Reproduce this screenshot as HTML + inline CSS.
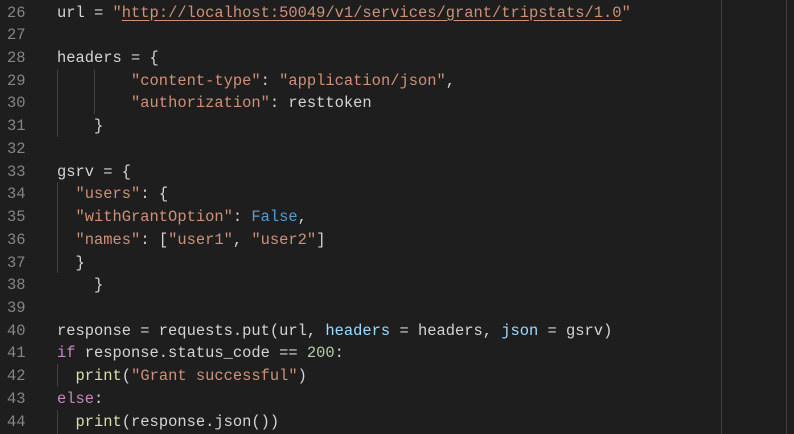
<!DOCTYPE html>
<html><head><meta charset="utf-8">
<style>
html,body{margin:0;padding:0;background:#1e1e1e;width:794px;height:434px;overflow:hidden;}
.ed{position:absolute;left:0;top:1.6px;font-family:"Liberation Mono",monospace;font-size:15.43px;line-height:22.72px;color:#d4d4d4;}
.l{height:22.72px;white-space:pre;position:relative;}
.n{position:absolute;left:7px;color:#858585;}
.c{position:absolute;left:57px;}
.s{color:#ce9178}
.k{color:#c586c0}
.b{color:#569cd6}
.p{color:#9cdcfe}
.f{color:#dcdcaa}
.num{color:#b5cea8}
.u{text-decoration:underline;text-underline-offset:3px}
.g{position:absolute;width:1px;background:#404040;}
.r{position:absolute;top:0;width:1px;height:434px;background:#3e3e3e;}
</style></head><body>
<div class="r" style="left:721px"></div>
<div class="r" style="left:786px"></div>
<!-- indent guides -->
<div class="g" style="left:57px;top:69px;height:68px"></div>
<div class="g" style="left:94px;top:69px;height:45px"></div>
<div class="g" style="left:57px;top:182px;height:91px"></div>
<div class="g" style="left:57px;top:364px;height:23px"></div>
<div class="g" style="left:57px;top:410px;height:24px"></div>
<div class="ed">
<div class="l"><span class="n">26</span><span class="c">url = <span class="s">"<span class="u">http://localhost:50049/v1/services/grant/tripstats/1.0</span>"</span></span></div>
<div class="l"><span class="n">27</span></div>
<div class="l"><span class="n">28</span><span class="c">headers = {</span></div>
<div class="l"><span class="n">29</span><span class="c">        <span class="s">"content-type"</span>: <span class="s">"application/json"</span>,</span></div>
<div class="l"><span class="n">30</span><span class="c">        <span class="s">"authorization"</span>: resttoken</span></div>
<div class="l"><span class="n">31</span><span class="c">    }</span></div>
<div class="l"><span class="n">32</span></div>
<div class="l"><span class="n">33</span><span class="c">gsrv = {</span></div>
<div class="l"><span class="n">34</span><span class="c">  <span class="s">"users"</span>: {</span></div>
<div class="l"><span class="n">35</span><span class="c">  <span class="s">"withGrantOption"</span>: <span class="b">False</span>,</span></div>
<div class="l"><span class="n">36</span><span class="c">  <span class="s">"names"</span>: [<span class="s">"user1"</span>, <span class="s">"user2"</span>]</span></div>
<div class="l"><span class="n">37</span><span class="c">  }</span></div>
<div class="l"><span class="n">38</span><span class="c">    }</span></div>
<div class="l"><span class="n">39</span></div>
<div class="l"><span class="n">40</span><span class="c">response = requests.put(url, <span class="p">headers</span> = headers, <span class="p">json</span> = gsrv)</span></div>
<div class="l"><span class="n">41</span><span class="c"><span class="k">if</span> response.status_code == <span class="num">200</span>:</span></div>
<div class="l"><span class="n">42</span><span class="c">  <span class="f">print</span>(<span class="s">"Grant successful"</span>)</span></div>
<div class="l"><span class="n">43</span><span class="c"><span class="k">else</span>:</span></div>
<div class="l"><span class="n">44</span><span class="c">  <span class="f">print</span>(response.json())</span></div>
</div>
</body></html>
